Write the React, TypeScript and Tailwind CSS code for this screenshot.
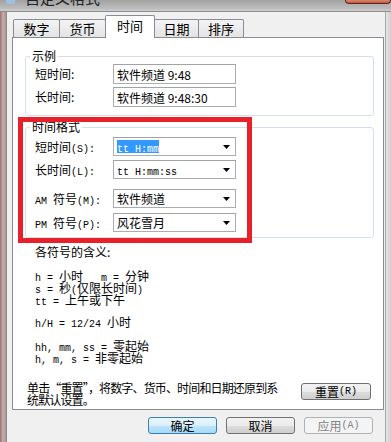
import type { ReactNode } from "react";

function Mono({ children }: { children: ReactNode }) {
  return (
    <span className="font-['Liberation_Mono','Noto_Sans_CJK_SC',monospace] text-[10px]">
      {children}
    </span>
  );
}

type FieldProps = {
  label: ReactNode;
  value: ReactNode;
  combo?: boolean;
  className?: string;
};

function Field({ label, value, combo, className }: FieldProps) {
  return (
    <div className={`flex items-center ${className ?? ""}`}>
      <div className="w-[78px] h-[12px] leading-[12px] whitespace-nowrap">{label}</div>
      <div
        className={`w-[123px] border border-[#abadb3] border-t-[#a0a3aa] bg-white flex items-center pl-[3px] pr-[5px] ${
          combo ? "h-[19px]" : "h-[20px]"
        }`}
      >
        <div className="flex-1 h-[13px] leading-[13px] whitespace-nowrap">{value}</div>
        {combo && (
          <svg width="7" height="4" viewBox="0 0 7 4">
            <path d="M0 0H7L3.5 4Z" fill="#000" />
          </svg>
        )}
      </div>
    </div>
  );
}

function Tab({ label, active, className }: { label: string; active?: boolean; className: string }) {
  if (active) {
    return (
      <div
        className={`relative z-10 -mb-px h-[23px] bg-white border border-b-0 border-[#898c95] rounded-t-[2px] flex items-center justify-center text-[13px] pb-[2px] ${className}`}
      >
        {label}
      </div>
    );
  }
  return (
    <div
      className={`h-[18px] bg-[linear-gradient(#f3f3f3,#e4e4e4)] border border-b-0 border-[#898c95] rounded-t-[2px] flex items-center justify-center text-[13px] ${className}`}
    >
      {label}
    </div>
  );
}

function Button({
  children,
  kind,
  className,
}: {
  children: ReactNode;
  kind?: "default" | "disabled";
  className: string;
}) {
  const look =
    kind === "default"
      ? "border-[#3c7fb1] bg-[linear-gradient(#eaf6fd_0%,#d9f0fc_50%,#bee6fd_51%,#a7d9f5_100%)] text-black"
      : kind === "disabled"
      ? "border-[#adb2b5] bg-[#f4f4f4] text-[#838383]"
      : "border-[#707070] bg-[linear-gradient(#f2f2f2_0%,#ebebeb_50%,#dddddd_51%,#cfcfcf_100%)] text-black";
  return (
    <div
      className={`border rounded-[3px] flex items-center justify-center leading-[12px] ${look} ${className}`}
    >
      {children}
    </div>
  );
}

function Line({ children, className }: { children: ReactNode; className?: string }) {
  return <div className={`h-[12px] leading-[12px] whitespace-pre ${className ?? ""}`}>{children}</div>;
}

export default function App() {
  return (
    <div className="relative w-[391px] h-[442px] overflow-hidden flex flex-col bg-[#f0f0f0] text-[12px] text-black font-['Noto_Sans_CJK_SC','Noto_Sans',sans-serif]">
      {/* title bar, cut off at the top */}
      <div className="h-[12px] flex overflow-hidden bg-[linear-gradient(#a2a2a2,#bdbdbd_80%,#cfcfcf)] border-b border-[#8d8d8d]">
        <div className="ml-[6px] w-[9px] h-[4px] bg-[#9cc0dd] rounded-b-[2px]" />
        <div className="ml-[10px] -mt-[10px] text-[15px] leading-[15px] text-[#222]">自定义格式</div>
        <div className="ml-auto w-[46px] h-[4px] bg-[linear-gradient(#d98a70,#c4553c)] border border-t-0 border-[#5a2a22] rounded-b-[4px]" />
      </div>

      <div className="flex-1 flex">
        <div className="w-[7px] bg-[linear-gradient(to_right,#8f7272,#c9aaaa_40%,#b59a9a_80%,#7a7a7a)]" />

        <div className="flex-1 flex flex-col">
          {/* tabs */}
          <div className="h-[25px] flex items-end pl-[6px]">
            <Tab label="数字" className="w-[47px]" />
            <Tab label="货币" className="w-[47px] -ml-px" />
            <Tab label="时间" active className="w-[50px] -ml-px" />
            <Tab label="日期" className="w-[45px] -ml-px" />
            <Tab label="排序" className="w-[46px] -ml-px" />
          </div>

          {/* tab panel */}
          <div className="ml-[5px] w-[372px] h-[373px] bg-white border border-[#898c95] flex flex-col">
            <fieldset className="mt-[11px] ml-[12px] w-[349px] border border-[#d5dfe5] rounded-[3px] pl-[4px] pb-[8px]">
              <legend className="px-[2px] leading-[14px]">示例</legend>
              <div className="pl-[5px]">
                <Field className="mt-[1px]" label="短时间:" value="软件频道 9:48" />
                <Field className="mt-[3px]" label="长时间:" value="软件频道 9:48:30" />
              </div>
            </fieldset>

            <fieldset className="mt-[4px] ml-[12px] w-[349px] border border-[#d5dfe5] rounded-[3px] pl-[4px] pb-[5px]">
              <legend className="px-[2px] leading-[14px]">时间格式</legend>
              <div className="pl-[5px]">
                <Field
                  combo
                  className="mt-[3px]"
                  label={
                    <>
                      短时间<Mono>(S):</Mono>
                    </>
                  }
                  value={
                    <span className="inline-block h-[13px] bg-[#3399ff] text-white leading-[13px]">
                      <Mono>tt H:mm</Mono>
                    </span>
                  }
                />
                <Field
                  combo
                  className="mt-[4px]"
                  label={
                    <>
                      长时间<Mono>(L):</Mono>
                    </>
                  }
                  value={<Mono>tt H:mm:ss</Mono>}
                />
                <Field
                  combo
                  className="mt-[10px]"
                  label={
                    <>
                      <Mono>AM </Mono>符号<Mono>(M):</Mono>
                    </>
                  }
                  value="软件频道"
                />
                <Field
                  combo
                  className="mt-[5px]"
                  label={
                    <>
                      <Mono>PM </Mono>符号<Mono>(P):</Mono>
                    </>
                  }
                  value="风花雪月"
                />
              </div>
            </fieldset>

            {/* meaning of the symbols */}
            <div className="ml-[22px] mt-[8px]">
              <Line>各符号的含义:</Line>
              <Line className="mt-[12px]">
                <Mono>h = </Mono>小时<Mono>   m = </Mono>分钟
              </Line>
              <Line>
                <Mono>s = </Mono>秒<Mono>(</Mono>仅限长时间<Mono>)</Mono>
              </Line>
              <Line>
                <Mono>tt = </Mono>上午或下午
              </Line>
              <Line className="mt-[10px]">
                <Mono>h/H = 12/24 </Mono>小时
              </Line>
              <Line className="mt-[12px]">
                <Mono>hh, mm, ss = </Mono>零起始
              </Line>
              <Line>
                <Mono>h, m, s = </Mono>非零起始
              </Line>
            </div>

            <div className="mt-[18px] flex items-start">
              <div className="ml-[14px] tracking-[-0.85px]">
                <Line>单击“重置”，将数字、货币、时间和日期还原到系</Line>
                <Line>统默认设置。</Line>
              </div>
              <Button className="ml-auto mr-[12px] mt-px w-[70px] h-[17px]">
                重置<Mono>(R)</Mono>
              </Button>
            </div>
          </div>

          {/* dialog buttons */}
          <div className="mt-[7px] flex justify-end gap-[9px] pr-[12px]">
            <Button kind="default" className="w-[69px] h-[17px]">
              确定
            </Button>
            <Button className="w-[69px] h-[17px]">取消</Button>
            <Button kind="disabled" className="w-[69px] h-[17px]">
              应用<Mono>(A)</Mono>
            </Button>
          </div>
        </div>

        <div className="w-[6px] border-l border-[#a8a8a8] bg-[linear-gradient(to_right,#e4e4e4,#cfcfcf)]" />
      </div>

      {/* red highlight drawn over the dialog */}
      <div className="absolute left-[18px] top-[117px] w-[234px] h-[126px] border-[5px] border-[#e8202a]" />
    </div>
  );
}
